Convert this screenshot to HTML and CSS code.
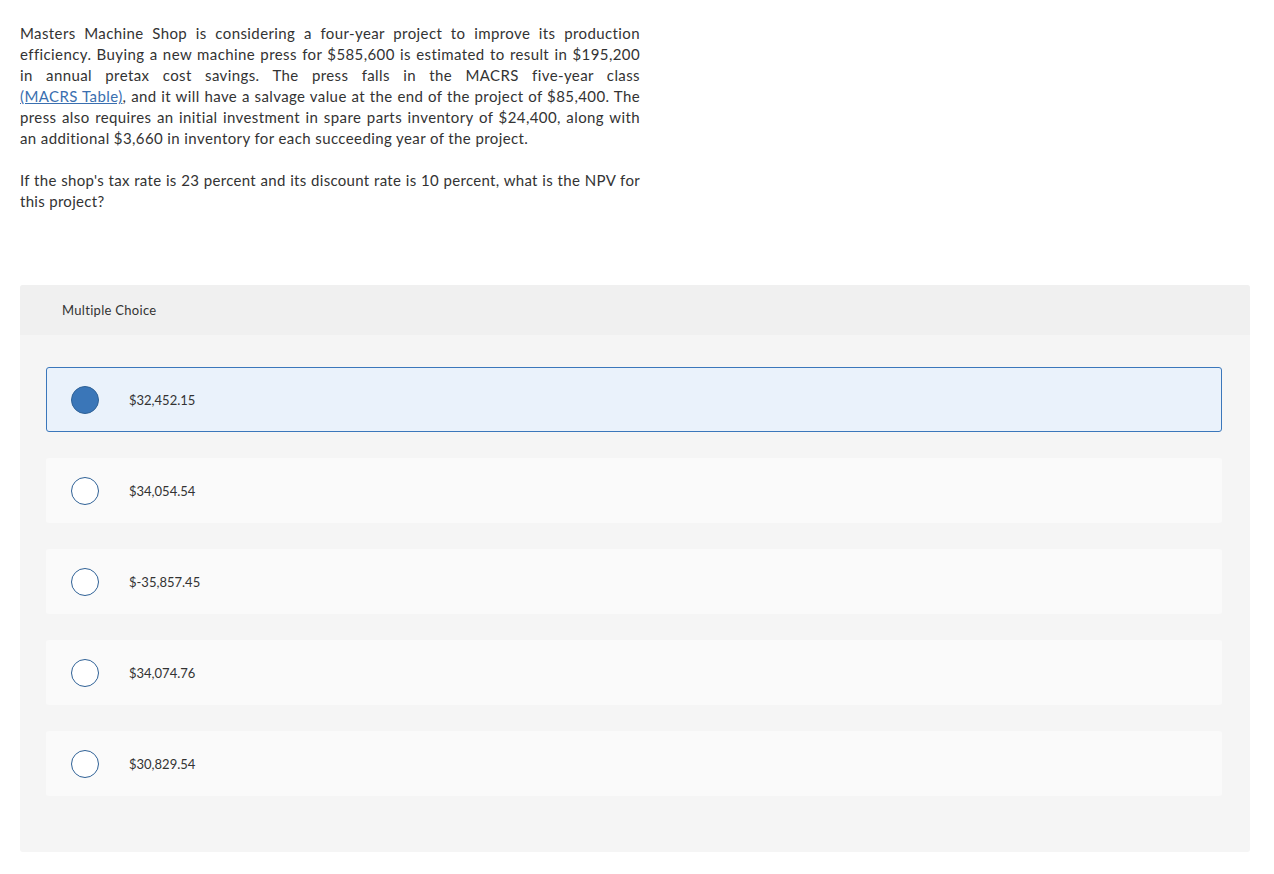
FILE: index.html
```html
<!DOCTYPE html>
<html lang="en">
<head>
    <meta charset="UTF-8">
    <title>Multiple Choice</title>
    <link rel="stylesheet" href="styles.css">
</head>
<body>
    <div class="question">
        <p>Masters Machine Shop is considering a four-year project to improve its production efficiency. Buying a new machine press for $585,600 is estimated to result in $195,200 in annual pretax cost savings. The press falls in the MACRS five-year class <a href="#">(MACRS Table)</a>, and it will have a salvage value at the end of the project of $85,400. The press also requires an initial investment in spare parts inventory of $24,400, along with an additional $3,660 in inventory for each succeeding year of the project.</p>
        <p class="prompt">If the shop's tax rate is 23 percent and its discount rate is 10 percent, what is the NPV for this project?</p>
    </div>

    <div class="choice-panel">
        <div class="choice-header">Multiple Choice</div>
        <ul class="choice-list">
            <li class="choice selected">
                <span class="radio"></span>
                <span class="choice-text">$32,452.15</span>
            </li>
            <li class="choice">
                <span class="radio"></span>
                <span class="choice-text">$34,054.54</span>
            </li>
            <li class="choice">
                <span class="radio"></span>
                <span class="choice-text">$-35,857.45</span>
            </li>
            <li class="choice">
                <span class="radio"></span>
                <span class="choice-text">$34,074.76</span>
            </li>
            <li class="choice">
                <span class="radio"></span>
                <span class="choice-text">$30,829.54</span>
            </li>
        </ul>
    </div>
</body>
</html>
```

FILE: styles.css
```css
body {
    margin: 0;
    padding: 23px 24px 22px 20px;
    font-family: Lato, 'Open Sans', sans-serif;
    color: #333;
    background-color: #fff;
}
.question {
    width: 620px;
    font-size: 15px;
    line-height: 21px;
    letter-spacing: 0.4px;
    text-align: justify;
}
.question p {
    margin: 0 0 21px;
}
.question .prompt {
    letter-spacing: 0.3px;
}
.question a {
    color: #3a6fb0;
    text-decoration: underline;
    white-space: nowrap;
}
.choice-panel {
    margin-top: 73px;
    background-color: #f5f5f5;
    border-radius: 3px;
    overflow: hidden;
}
.choice-header {
    height: 50px;
    line-height: 50px;
    padding-left: 42px;
    font-size: 13px;
    letter-spacing: 0.3px;
    background-color: #f0f0f0;
    color: #333;
}
.choice-list {
    list-style-type: none;
    margin: 0;
    padding: 32px 28px 56px 26px;
    display: flex;
    flex-direction: column;
    gap: 26px;
}
.choice {
    height: 65px;
    box-sizing: border-box;
    display: flex;
    align-items: center;
    padding-left: 24px;
    background-color: #fafafa;
    border: 1px solid transparent;
    border-radius: 3px;
}
.choice.selected {
    background-color: #eaf2fb;
    border-color: #3b77bb;
}
.radio {
    width: 28px;
    height: 28px;
    box-sizing: border-box;
    border: 1.5px solid #2f6196;
    border-radius: 50%;
    background-color: #fff;
    margin-right: 30px;
    flex-shrink: 0;
}
.choice.selected .radio {
    background-color: #3a76b8;
    border-color: #2f6196;
}
.choice-text {
    font-size: 13px;
    color: #333;
}
```
